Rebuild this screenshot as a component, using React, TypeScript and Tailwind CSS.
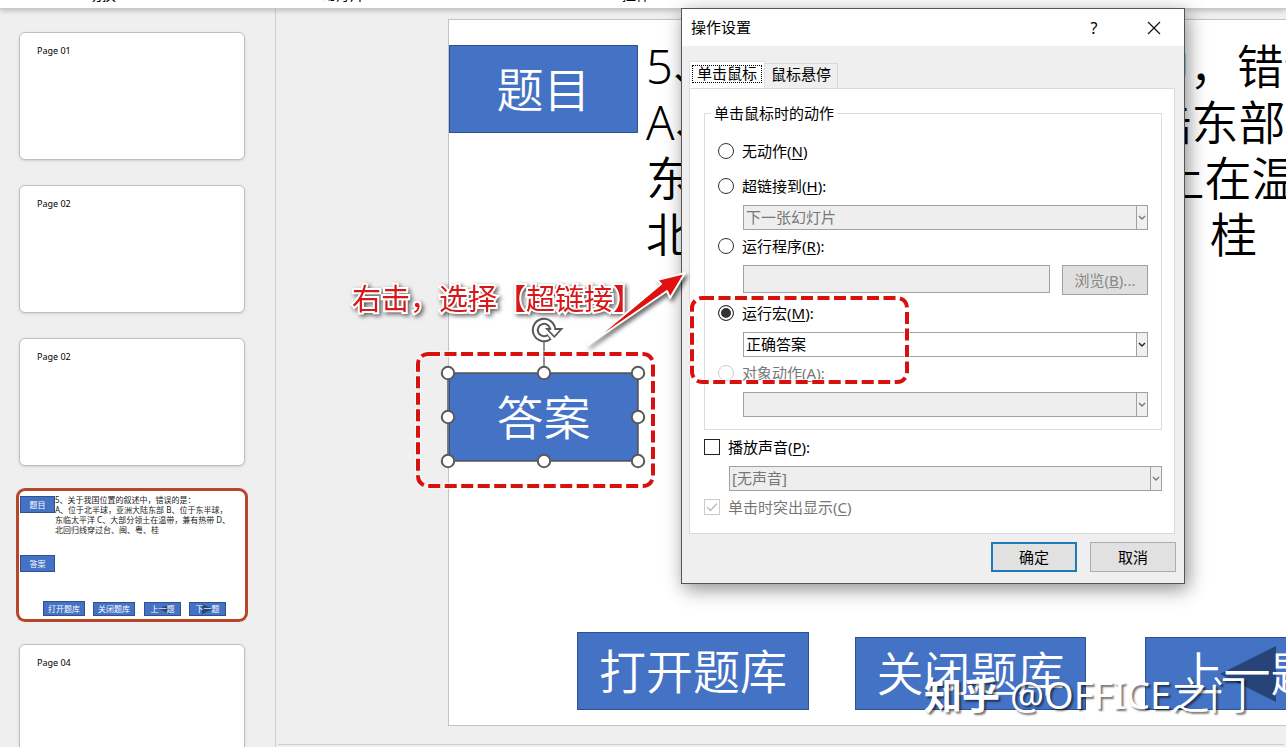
import React, { useState } from 'react';
import clsx from 'clsx';

const cjk = "font-['Noto_Sans','Noto_Sans_CJK_SC',sans-serif]";

const questionLines = [
  '5、关于我国位置的叙述中，错误的是：',
  'A、位于北半球，亚洲大陆东部 B、位于东半球，',
  '东临太平洋 C、大部分领土在温带，兼有热带 D、',
  '北回归线穿过台、闽、粤、桂',
];

interface SelectBoxProps {
  label: string;
  options: string[];
  disabled?: boolean;
  className?: string;
}

const SelectBox: React.FC<SelectBoxProps> = ({ label, options, disabled, className }) => (
  <div className={clsx('relative h-[25px]', className)}>
    <select
      aria-label={label}
      disabled={disabled}
      className="h-full w-full appearance-none rounded-none border border-[#a0a0a0] bg-white pr-4 pb-[2px] pl-[2px] text-[15px] leading-5 text-black opacity-100 disabled:bg-[#eeeeee] disabled:text-[#777777]"
    >
      {options.map((option) => (
        <option key={option}>{option}</option>
      ))}
    </select>
    <span className="pointer-events-none absolute inset-y-px right-px flex w-[11px] items-center justify-center border-l border-[#a0a0a0] bg-[#f0f0f0]">
      <svg width="8" height="6" viewBox="0 0 8 6" fill="none" stroke={disabled ? '#777' : '#222'} strokeWidth="1.4">
        <path d="M1 1l3 3 3-3" />
      </svg>
    </span>
  </div>
);

interface ActionRadioProps {
  value: string;
  text: string;
  hotkey: string;
  suffix?: string;
  current: string;
  disabled?: boolean;
  onPick: (value: string) => void;
  className?: string;
}

const ActionRadio: React.FC<ActionRadioProps> = ({ value, text, hotkey, suffix, current, disabled, onPick, className }) => (
  <label className={clsx('flex h-5 items-center gap-2 leading-5', disabled && 'text-[#777777]', className)}>
    <input
      type="radio"
      name="action"
      value={value}
      checked={current === value}
      disabled={disabled}
      onChange={() => onPick(value)}
      className="size-4 appearance-none rounded-full border border-[#333333] bg-white checked:bg-[#333333] checked:shadow-[inset_0_0_0_2px_white] disabled:border-[#cccccc]"
    />
    <span>
      {text}(<u className="underline-offset-2">{hotkey}</u>){suffix}
    </span>
  </label>
);

const Dialog = () => {
  const [action, setAction] = useState('macro');
  const [sound, setSound] = useState(false);

  return (
    <section
      aria-label="操作设置"
      className="absolute top-2 left-[681px] w-[504px] border border-[#555555] bg-[#efefef] text-[15px] text-black shadow-[3px_5px_18px_rgba(0,0,0,0.45)]"
    >
      <header className="flex h-[37px] items-center bg-white pl-[9px]">
        <h2 className="flex-1">操作设置</h2>
        <button aria-label="帮助" className="h-full w-[58px] text-[16px]">?</button>
        <button aria-label="关闭" className="flex h-full w-[61px] items-center justify-center">
          <svg width="14" height="14" viewBox="0 0 14 14" stroke="#111" strokeWidth="1.2">
            <path d="M1 1l12 12M13 1L1 13" />
          </svg>
        </button>
      </header>

      <div className="px-[7px] pt-[15px] pb-[11px]">
        {/* tabs */}
        <div role="tablist" className="flex items-end">
          <button role="tab" aria-selected="true" className="h-[27px] border border-b-0 border-[#e0e0e0] bg-white p-[2px] pb-[5px]">
            <span className="flex h-[18px] items-center border border-dotted border-black px-1 pb-[2px] leading-[14px] whitespace-nowrap">单击鼠标</span>
          </button>
          <button role="tab" aria-selected="false" className="h-[25px] border border-b-0 border-l-0 border-[#d9d9d9] px-[6px] pb-1 leading-5 whitespace-nowrap">
            鼠标悬停
          </button>
        </div>

        <div role="tabpanel" className="mr-[2px] border border-[#d9d9d9] bg-white py-[14px] pr-3 pl-[14px]">
          <fieldset className="min-w-0 border border-[#dcdcdc] px-[13px] pb-3">
            <legend className="-ml-[7px] px-[3px] leading-5">单击鼠标时的动作</legend>
            <ActionRadio className="mt-[18px]" value="none" text="无动作" hotkey="N" current={action} onPick={setAction} />
            <ActionRadio className="mt-[15px]" value="link" text="超链接到" hotkey="H" suffix=":" current={action} onPick={setAction} />
            <SelectBox className="mt-[9px] ml-[25px]" label="超链接到" options={['下一张幻灯片']} disabled />
            <ActionRadio className="mt-[6px]" value="program" text="运行程序" hotkey="R" suffix=":" current={action} onPick={setAction} />
            <div className="mt-[9px] ml-[25px] flex h-[30px] items-start gap-3">
              <input aria-label="运行程序" disabled className="h-7 min-w-0 flex-1 border border-[#a0a0a0] bg-[#eeeeee]" />
              <button disabled className="h-[30px] w-[86px] border border-[#a0a0a0] bg-[#dfdfdf] text-[#888888]">
                浏览(<u>B</u>)...
              </button>
            </div>
            <ActionRadio className="mt-2" value="macro" text="运行宏" hotkey="M" suffix=":" current={action} onPick={setAction} />
            <SelectBox className="mt-[9px] ml-[25px]" label="运行宏" options={['正确答案']} />
            <ActionRadio className="mt-[6px]" value="object" text="对象动作" hotkey="A" suffix=":" current={action} disabled onPick={setAction} />
            <SelectBox className="mt-[9px] ml-[25px]" label="对象动作" options={['']} disabled />
          </fieldset>

          <label className="mt-[7px] flex h-5 items-center gap-2 leading-5">
            <input
              type="checkbox"
              checked={sound}
              onChange={(e) => setSound(e.target.checked)}
              className="size-4 appearance-none border border-[#222222] bg-white checked:bg-[#333333]"
            />
            <span>播放声音(<u className="underline-offset-2">P</u>):</span>
          </label>
          <SelectBox className="mt-[9px] ml-[25px]" label="播放声音" options={['[无声音]']} disabled />
          <label className="mt-[6px] mb-[2px] flex h-5 items-center gap-2 leading-5 text-[#777777]">
            <span className="grid size-4">
              <input type="checkbox" checked readOnly disabled className="col-start-1 row-start-1 size-4 appearance-none border border-[#cccccc] bg-white" />
              <svg className="col-start-1 row-start-1" width="16" height="16" viewBox="0 0 16 16" fill="none" stroke="#bbb" strokeWidth="1.4">
                <path d="M3 8l3.500 3.500L13 4.500" />
              </svg>
            </span>
            <span>单击时突出显示(<u className="underline-offset-2">C</u>)</span>
          </label>
        </div>

        <div className="mt-2 flex justify-end gap-[13px]">
          <button className="h-[30px] w-[86px] border-2 border-[#1f7ab8] bg-[#e1e1e1]">确定</button>
          <button className="mr-px h-[30px] w-[86px] border border-[#adadad] bg-[#e1e1e1]">取消</button>
        </div>
      </div>
    </section>
  );
};

const blank = 'h-32 shrink-0 rounded-md bg-white';

const PageThumb: React.FC<{ title: string }> = ({ title }) => (
  <li className={clsx(blank, 'border border-[#bfbfbf] px-[17px] pt-3 text-[9px] leading-3 shadow-sm')}>{title}</li>
);

const mini = 'absolute flex items-center justify-center border border-[#2f528f] bg-[#4472c4] text-white whitespace-nowrap';

const ActiveThumb = () => (
  <li className={clsx(blank, 'relative ring-3 ring-[#b7472a]')}>
    <span className={clsx(mini, 'top-[5px] left-px h-[17px] w-[35px] text-[8px]')}>题目</span>
    <div className="absolute top-1 left-9 text-[8px] leading-[10px] whitespace-nowrap text-[#222222]">
      {questionLines.map((line) => (
        <p key={line}>{line}</p>
      ))}
    </div>
    <span className={clsx(mini, 'top-16 left-px h-[17px] w-[35px] text-[8px]')}>答案</span>
    <span className={clsx(mini, 'top-[110px] left-6 h-[15px] w-[42px] text-[8px]')}>打开题库</span>
    <span className={clsx(mini, 'top-[111px] left-[74px] h-[14px] w-[42px] text-[8px]')}>关闭题库</span>
    <span className={clsx(mini, 'top-[111px] left-[125px] h-[14px] w-[37px] text-[8px]')}>
      <svg className="absolute left-[14px]" width="11" height="10" viewBox="0 0 11 10" fill="#264478"><path d="M0 5l11-5v10z" /></svg>
      <span className="relative">上一题</span>
    </span>
    <span className={clsx(mini, 'top-[111px] left-[170px] h-[14px] w-[37px] text-[8px]')}>
      <svg className="absolute left-3" width="11" height="10" viewBox="0 0 11 10" fill="#264478"><path d="M11 5L0 0v10z" /></svg>
      <span className="relative">下一题</span>
    </span>
  </li>
);

const shape = 'absolute flex items-center justify-center border border-[#2f528f] bg-[#4472c4] text-[47px] leading-none font-[350] text-white whitespace-nowrap';

// 8 grips around the selected shape
const grips: [number, number][] = [
  [8, 52], [104, 52], [198, 52],
  [8, 96], [198, 96],
  [8, 140], [104, 140], [198, 140],
];

const Selection = () => (
  <svg className="absolute top-[286px] -left-2" width="210" height="166" viewBox="0 -16 210 166" fill="none">
    <path d="M104 20V52" stroke="#595959" strokeWidth="1.300" />
    <rect x="8" y="52" width="190" height="88" stroke="#595959" strokeWidth="1.500" />
    {grips.map(([x, y]) => (
      <circle key={`${x}-${y}`} cx={x} cy={y} r="6.200" fill="#fff" stroke="#595959" strokeWidth="2" />
    ))}
    {/* rotate handle */}
    <path d="M112.700 9A8.700 8.700 0 1 0 109.500 15.700" stroke="#595959" strokeWidth="7" />
    <path d="M112.700 9A8.700 8.700 0 1 0 108.600 16.400" stroke="#fff" strokeWidth="3" />
    <path d="M107 8h14.500l-7.200 7.800z" fill="#fff" stroke="#595959" strokeWidth="1.800" />
    <path d="M111.200 6.500h3v3h-3z" fill="#fff" />
  </svg>
);

const Slide = () => (
  <div className="absolute top-[10px] left-[172px] h-[707px] w-[1255px] border border-[#c3c3c3] bg-white">
    <div className={clsx(shape, 'top-[25px] left-0 h-[88px] w-[189px]')}>题目</div>
    <div className="absolute top-[18px] left-[197px] text-[47px] leading-[56px] font-[350] whitespace-nowrap text-black">
      {questionLines.map((line) => (
        <p key={line}>{line}</p>
      ))}
    </div>
    <div className={clsx(shape, 'top-[353px] left-0 h-[88px] w-[189px]')}>答案</div>
    <button className={clsx(shape, 'top-[612px] left-32 h-[78px] w-[232px]')}>打开题库</button>
    <button className={clsx(shape, 'top-[617px] left-[406px] h-[73px] w-[231px]')}>关闭题库</button>
    <button className={clsx(shape, 'top-[617px] left-[696px] h-[73px] w-[204px]')}>
      <svg className="absolute top-2 left-[74px]" width="56" height="56" viewBox="0 0 56 56" fill="#264478"><path d="M0 28L56 0v56z" /></svg>
      <span className="relative">上一题</span>
    </button>
  </div>
);

const DashedFrame: React.FC<{ className: string; width: number; height: number }> = ({ className, width, height }) => (
  <svg className={clsx('pointer-events-none absolute', className)} width={width} height={height} fill="none">
    <rect x="3" y="3" width={width - 6} height={height - 6} rx="10" stroke="#fff" strokeOpacity="0.7" strokeWidth="6" strokeDasharray="13 3.500" />
    <rect x="3" y="3" width={width - 6} height={height - 6} rx="10" stroke="#d81010" strokeWidth="4" strokeDasharray="12 4.500" />
  </svg>
);

export default function App() {
  return (
    <div className={clsx('relative flex h-screen flex-col overflow-hidden bg-[#efefef] text-black', cjk)}>
      <nav className="relative flex h-[9px] shrink-0 items-end overflow-hidden border-b border-[#c9c9c9] bg-white pl-[88px] text-[14px] leading-4 shadow-[0_2px_5px_rgba(0,0,0,0.2)]">
        <span className="mb-[5px] w-[234px]">切换</span>
        <span className="mb-[5px] w-[300px]">幻灯片</span>
        <span className="mb-[5px]">控件</span>
      </nav>

      <div className="flex min-h-0 flex-1">
        <ul className="flex w-[276px] shrink-0 flex-col gap-[25px] overflow-hidden border-r border-[#cfcfcf] pt-[23px] pr-[30px] pl-[19px]">
          <PageThumb title="Page 01" />
          <PageThumb title="Page 02" />
          <PageThumb title="Page 02" />
          <ActiveThumb />
          <PageThumb title="Page 04" />
        </ul>

        <main className="relative flex-1 overflow-hidden">
          <Slide />
          <div className="absolute top-[10px] left-[172px]">
            <Selection />
          </div>
          <div className="absolute inset-x-[2px] bottom-0 h-[3px] border-t border-[#cccccc]" />
        </main>
      </div>

      <Dialog />

      {/* annotations */}
      <DashedFrame className="top-[351px] left-[415px]" width={241} height={138} />
      <DashedFrame className="top-[295px] left-[689px]" width={221} height={90} />
      <p className="absolute top-[282px] left-[352px] text-[29px] leading-[34px] whitespace-nowrap text-[#d81818] [paint-order:stroke_fill] [-webkit-text-stroke:4px_white] [filter:drop-shadow(2px_2px_2px_rgba(0,0,0,0.6))]">
        右击，选择【超链接】
      </p>
      <svg className="absolute top-[262px] left-[580px] drop-shadow-[2px_3px_2px_rgba(0,0,0,0.6)]" width="115" height="90" viewBox="0 0 115 90">
        <path d="M8 83L81 22L77 18L105 11L90 36L87 29Z" fill="#e01010" stroke="#fff" strokeWidth="2" strokeLinejoin="round" />
      </svg>
      <p className="absolute top-[670px] left-[924px] text-[38px] leading-[48px] whitespace-nowrap text-white [text-shadow:2px_2px_2px_rgba(0,0,0,0.55)]">
        <span className="font-bold">知乎</span> @OFFICE之门
      </p>
    </div>
  );
}
